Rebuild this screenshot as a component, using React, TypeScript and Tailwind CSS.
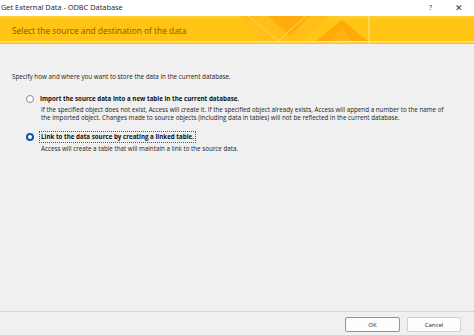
import React from "react";

export default function App() {
  const font = { fontFamily: '"Open Sans", "Noto Sans", "Liberation Sans", sans-serif' };
  return (
    <div className="w-[474px] h-[335px] bg-[#f0f0f0] flex flex-col overflow-hidden text-[#222]" style={font}>
      {/* title bar */}
      <div className="h-[16px] bg-white flex items-center relative shrink-0">
        <span className="text-[7.4px] text-[#1a1a1a] ml-[1px] leading-none">Get External Data - ODBC Database</span>
        <span className="absolute left-[429px] top-[4px] text-[7px] leading-none text-[#333]">?</span>
        <span className="absolute left-[455px] top-[3px] text-[9px] leading-none text-[#333]">✕</span>
      </div>
      {/* banner */}
      <div className="h-[28px] relative bg-[#ffc414] shrink-0 overflow-hidden">
        <svg className="absolute inset-0" width="474" height="28" viewBox="0 0 474 28">
          <rect x="0" y="0" width="474" height="28" fill="#ffc414" />
          <polygon points="0,0 474,0 474,3 0,3" fill="#ffcb2a" />
          <polygon points="240,0 330,0 300,25 260,25" fill="#ffbf18" />
          <polygon points="268,0 310,0 290,20" fill="#ffad0a" />
          <line x1="248" y1="0" x2="278" y2="25" stroke="#ffd65a" strokeWidth="1" />
          <line x1="278" y1="25" x2="306" y2="0" stroke="#ffd65a" strokeWidth="1" />
          <polygon points="316,25 342,4 368,25" fill="#ffaa08" />
          <polygon points="330,25 342,12 352,25" fill="#ffb214" />
          <rect x="0" y="25" width="474" height="1.5" fill="#ffe27a" />
          <rect x="368.5" y="0" width="1" height="28" fill="#ffe48a" />
        </svg>
        <span className="absolute left-[12px] top-[11px] text-[8.4px] leading-none text-[#8a5600]">
          Select the source and destination of the data
        </span>
      </div>
      {/* body */}
      <div className="flex-1 flex flex-col pl-[12px] pt-[29px]">
        <div className="text-[6.3px] leading-[8px] text-[#222]">
          Specify how and where you want to store the data in the current database.
        </div>
        <div className="mt-[13px] ml-[14px] flex flex-col">
          <div className="flex items-center gap-[6px] h-[10px]">
            <span className="w-[8px] h-[8px] rounded-full border border-[#8a8a8a] bg-white shrink-0" />
            <span className="text-[6.2px] font-bold leading-none text-[#111]">
              Import the source data into a new table in the current database.
            </span>
          </div>
          <div className="ml-[15px] mt-[2px] text-[6.25px] leading-[8px] text-[#222]">
            <div>If the specified object does not exist, Access will create it. If the specified object already exists, Access will append a number to the name of</div>
            <div>the imported object. Changes made to source objects (including data in tables) will not be reflected in the current database.</div>
          </div>
          <div className="flex items-center gap-[5px] h-[12px] mt-[9px]">
            <span className="w-[8px] h-[8px] rounded-full border-[2.5px] border-[#0b56b3] bg-white shrink-0" />
            <span className="text-[6.2px] font-bold leading-none text-[#111] border border-dotted border-[#555] px-[1px] py-[2px]">
              Link to the data source by creating a linked table.
            </span>
          </div>
          <div className="ml-[15px] mt-[2px] text-[6.25px] leading-[8.5px] text-[#222]">
            Access will create a table that will maintain a link to the source data.
          </div>
        </div>
      </div>
      {/* footer */}
      <div className="h-[24px] shrink-0 border-t border-[#d6d6d6] flex items-start justify-end pt-[5px] pr-[13px] gap-[7px]">
        <button className="w-[55px] h-[15px] bg-[#fdfdfd] border border-[#6d9cc4] rounded-[2px] text-[6px] text-[#222] leading-none">OK</button>
        <button className="w-[54px] h-[15px] bg-[#fdfdfd] border border-[#d0d0d0] rounded-[2px] text-[6px] text-[#222] leading-none">Cancel</button>
      </div>
    </div>
  );
}
